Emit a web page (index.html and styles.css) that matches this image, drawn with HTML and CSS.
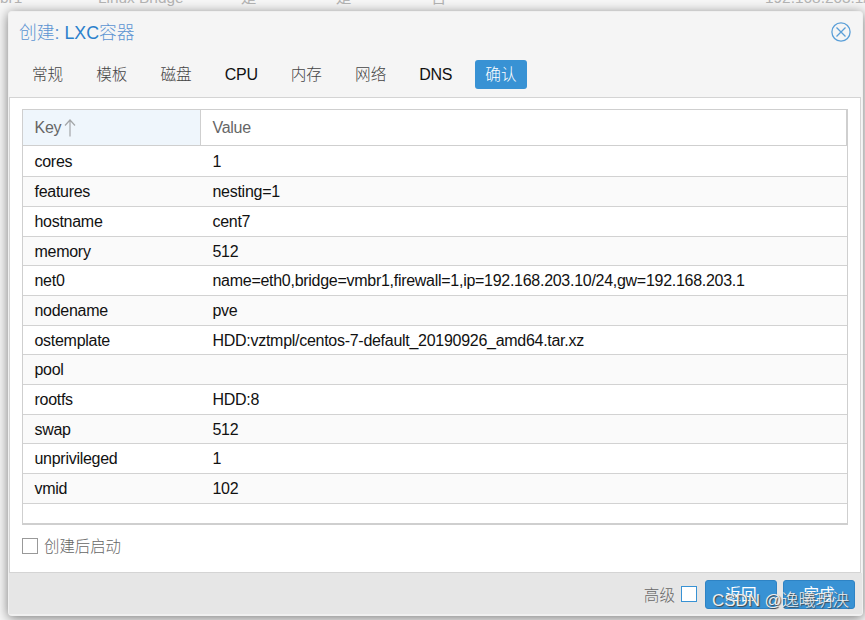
FILE: index.html
```html
<!DOCTYPE html>
<html lang="zh-CN">
<head>
    <meta charset="UTF-8">
    <meta name="viewport" content="width=device-width, initial-scale=1.0">
    <title>创建: LXC容器</title>
    <link rel="stylesheet" href="styles.css">
</head>
<body>
    <div class="backdrop">
        <span class="bg-name">br1</span>
        <span class="bg-type">Linux Bridge</span>
        <span class="bg-active">是</span>
        <span class="bg-auto">是</span>
        <span class="bg-vlan">否</span>
        <span class="bg-ip">192.168.203.1/</span>
    </div>

    <div class="window">
        <div class="header">
            <div class="title-bar">
                <div class="title">创建: <span class="latin">LXC</span>容器</div>
                <svg class="close" width="20" height="20" viewBox="0 0 20 20" fill="none" stroke="#5a9fd8" stroke-width="1.3">
                    <circle cx="10" cy="10" r="9.1"/>
                    <path d="M5.5 5.5L14.5 14.5M14.5 5.5L5.5 14.5"/>
                </svg>
            </div>
            <div class="tabs">
                <div class="tab">常规</div>
                <div class="tab">模板</div>
                <div class="tab">磁盘</div>
                <div class="tab tab-latin">CPU</div>
                <div class="tab">内存</div>
                <div class="tab">网络</div>
                <div class="tab tab-latin">DNS</div>
                <div class="tab active">确认</div>
            </div>
        </div>

        <div class="body">
            <div class="grid">
                <div class="grid-header">
                    <div class="col-key">Key
                        <svg class="sort" width="12" height="18" viewBox="0 0 12 18" fill="none" stroke="#a3a6a8" stroke-width="1.2">
                            <path d="M6 17.5V1M1 6.5L6 1L11 6.5"/>
                        </svg>
                    </div>
                    <div class="col-value">Value</div>
                </div>
                <div class="row first"><div class="key">cores</div><div>1</div></div>
                <div class="row"><div class="key">features</div><div>nesting=1</div></div>
                <div class="row"><div class="key">hostname</div><div>cent7</div></div>
                <div class="row"><div class="key">memory</div><div>512</div></div>
                <div class="row"><div class="key">net0</div><div>name=eth0,bridge=vmbr1,firewall=1,ip=192.168.203.10/24,gw=192.168.203.1</div></div>
                <div class="row"><div class="key">nodename</div><div>pve</div></div>
                <div class="row"><div class="key">ostemplate</div><div>HDD:vztmpl/centos-7-default_20190926_amd64.tar.xz</div></div>
                <div class="row"><div class="key">pool</div><div></div></div>
                <div class="row"><div class="key">rootfs</div><div>HDD:8</div></div>
                <div class="row"><div class="key">swap</div><div>512</div></div>
                <div class="row"><div class="key">unprivileged</div><div>1</div></div>
                <div class="row"><div class="key">vmid</div><div>102</div></div>
            </div>
            <div class="start-after">
                <span class="checkbox"></span>
                <span>创建后启动</span>
            </div>
        </div>

        <div class="footer">
            <span class="advanced">高级</span>
            <span class="checkbox checkbox-blue"></span>
            <div class="btn">返回</div>
            <div class="btn">完成</div>
        </div>
    </div>

    <div class="watermark">CSDN @逸曦玥泱</div>
</body>
</html>
```
FILE: styles.css
```css
* {
    box-sizing: border-box;
}
body {
    margin: 0;
    width: 865px;
    height: 620px;
    overflow: hidden;
    position: relative;
    font-family: "Liberation Sans", "Noto Sans CJK SC", sans-serif;
    font-size: 15.6px;
    color: #111;
    background-color: #f6f6f6;
    padding: 11px 2px 0 8px;
}
/* grid row behind the dialog */
.backdrop {
    position: absolute;
    top: 0;
    left: 0;
    width: 865px;
    height: 11px;
    overflow: hidden;
    font-size: 15.4px;
    line-height: 16px;
    color: #b4b4b4;
    white-space: nowrap;
}
.backdrop span {
    position: absolute;
    top: -10px;
}
.bg-name { left: 0; }
.bg-type { left: 98px; }
.bg-active { left: 241px; }
.bg-auto { left: 336px; }
.bg-vlan { left: 431px; }
.bg-ip { left: 765px; }
.window {
    position: relative;
    width: 855px;
    height: 605px;
    background-color: #f5f5f5;
    border-radius: 4px;
    border: 1px solid #f0f0f0;
    border-bottom-width: 2px;
    box-shadow: 0 2px 12px rgba(0,0,0,0.5);
    display: flex;
    flex-direction: column;
}
.header {
    height: 85px;
    flex: none;
}
.title-bar {
    display: flex;
    justify-content: space-between;
    align-items: center;
    height: 40px;
    padding: 0 11px 0 10px;
}
.title {
    font-size: 17.8px;
    font-weight: 300;
    color: #5b93d2;
    padding-bottom: 3px;
}
.latin {
    color: #2a80cc;
    font-weight: 400;
}
.close {
    display: block;
}
.tabs {
    display: flex;
    gap: 12.1px;
    padding: 8px 0 0 12.4px;
}
.tab {
    height: 29px;
    line-height: 29px;
    padding: 0 10.5px;
    font-weight: 300;
    color: #444;
    border-radius: 3px;
}
.tab-latin {
    color: #111;
    font-weight: 400;
    font-size: 16px;
    letter-spacing: -0.3px;
}
.tab.active {
    background-color: #3892d4;
    color: #fff;
}
.body {
    height: 476px;
    flex: none;
    background-color: #fff;
    border: 1px solid #d4d4d4;
    margin: 0 1px 0 0;
    padding: 11px 12px 0 12px;
}
.grid {
    height: 416px;
    border: 1px solid #cfcfcf;
    border-bottom-width: 2px;
    font-size: 16px;
    letter-spacing: -0.28px;
}
.grid-header {
    display: flex;
    height: 36px;
    line-height: 35px;
    color: #666;
    border-right: 1px solid #cfcfcf;
    border-bottom: 1px solid #cfcfcf;
}
.col-key {
    width: 178px;
    padding-left: 11.5px;
    background-color: #eff6fc;
    border-right: 1px solid #cfcfcf;
    display: flex;
    align-items: center;
    gap: 3px;
}
.col-value {
    padding-left: 11.5px;
}
.row {
    display: flex;
    height: 29.67px;
    line-height: 29px;
    border-bottom: 1px solid #d2d2d2;
    white-space: nowrap;
}
.row.first {
    height: 31.4px;
    line-height: 32px;
}
.row:nth-child(odd) {
    background-color: #fafafa;
}
.key {
    width: 178px;
    padding-left: 11.5px;
    margin-right: 11.5px;
}
.start-after {
    display: flex;
    align-items: center;
    gap: 6px;
    margin-top: 10px;
    height: 22px;
    font-size: 15.4px;
    font-weight: 300;
    color: #666;
}
.start-after span:last-child {
    padding-bottom: 2px;
}
.checkbox {
    width: 16px;
    height: 16px;
    border: 1px solid #999;
    background-color: #fff;
}
.footer {
    flex: 1;
    display: flex;
    align-items: center;
    justify-content: flex-end;
    background-color: #e6e6e6;
    padding: 1px 7px 0 0;
}
.advanced {
    color: #666;
    font-weight: 300;
    margin-right: 6px;
    padding-bottom: 1px;
}
.checkbox-blue {
    border-color: #3892d4;
    margin-right: 8px;
}
.btn {
    width: 72px;
    height: 29px;
    line-height: 27px;
    text-align: center;
    color: #fff;
    background-color: #3892d4;
    border: 1px solid #2e83c4;
    border-radius: 3px;
}
.btn + .btn {
    margin-left: 6px;
}
.watermark {
    position: absolute;
    left: 712px;
    top: 590px;
    font-size: 16.9px;
    line-height: 22px;
    font-weight: 300;
    color: #eee;
    text-shadow: 1px 1px 1px #444;
    white-space: nowrap;
}
```
